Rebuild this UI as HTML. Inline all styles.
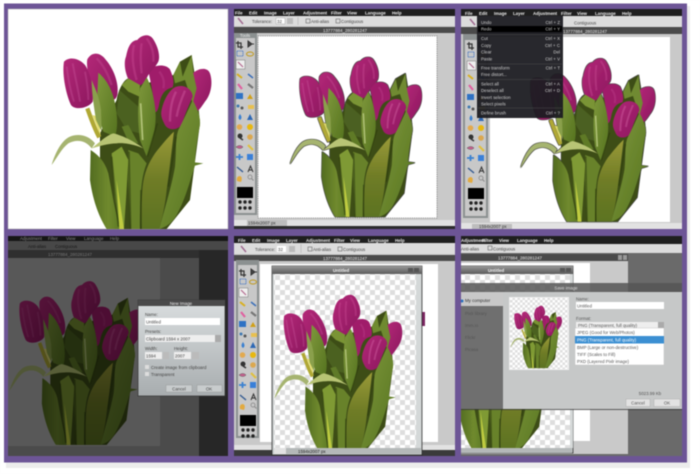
<!DOCTYPE html>
<html>
<head>
<meta charset="utf-8">
<style>
html,body{margin:0;padding:0;width:700px;height:474px;overflow:hidden;background:#fbfbfb}
svg{display:block;filter:blur(.45px)}
text{font-family:"Liberation Sans",sans-serif;font-size:4.4px}
</style>
</head>
<body>
<svg width="700" height="474" viewBox="0 0 700 474" xmlns="http://www.w3.org/2000/svg">
<defs>
<pattern id="chk" width="10" height="10" patternUnits="userSpaceOnUse">
<rect width="10" height="10" fill="#fff"/><rect width="5" height="5" fill="#dedede"/><rect x="5" y="5" width="5" height="5" fill="#dedede"/>
</pattern>
<pattern id="chk2" width="5" height="5" patternUnits="userSpaceOnUse">
<rect width="5" height="5" fill="#fff"/><rect width="2.5" height="2.5" fill="#dedede"/><rect x="2.5" y="2.5" width="2.5" height="2.5" fill="#dedede"/>
</pattern>
<linearGradient id="olive" x1="0" y1="0" x2="0" y2="1"><stop offset="0" stop-color="#9a9a38"/><stop offset=".5" stop-color="#6f7c26"/><stop offset="1" stop-color="#5c7322"/></linearGradient>
<linearGradient id="grn" x1="0" y1="0" x2="1" y2="1"><stop offset="0" stop-color="#7f983c"/><stop offset="1" stop-color="#55731f"/></linearGradient>
<linearGradient id="grn2" x1="0" y1="0" x2="1" y2="0"><stop offset="0" stop-color="#526c20"/><stop offset=".6" stop-color="#708a2e"/><stop offset="1" stop-color="#5c7a24"/></linearGradient>
<linearGradient id="mag" x1="0" y1="0" x2="1" y2="1"><stop offset="0" stop-color="#b32878"/><stop offset="1" stop-color="#8c175e"/></linearGradient>
<linearGradient id="dlg" x1="0" y1="0" x2="0" y2="1"><stop offset="0" stop-color="#dadedf"/><stop offset="1" stop-color="#a8adaf"/></linearGradient>
<linearGradient id="ttl" x1="0" y1="0" x2="0" y2="1"><stop offset="0" stop-color="#999"/><stop offset="1" stop-color="#5a5a5a"/></linearGradient>
<filter id="ants" x="-5%" y="-5%" width="110%" height="110%">
<feMorphology in="SourceAlpha" operator="dilate" radius="2" result="d"/>
<feFlood flood-color="#444"/><feComposite in2="d" operator="in" result="o"/>
<feMerge><feMergeNode in="o"/><feMergeNode in="SourceGraphic"/></feMerge>
</filter>
<clipPath id="c1"><rect x="8" y="9" width="220" height="220"/></clipPath>
<clipPath id="c2"><rect x="234" y="9" width="221" height="220"/></clipPath>
<clipPath id="c3"><rect x="461" y="9" width="221" height="220"/></clipPath>
<clipPath id="c4"><rect x="8" y="236" width="220" height="220"/></clipPath>
<clipPath id="c4b"><rect x="8" y="258" width="152" height="188"/></clipPath>
<clipPath id="c5"><rect x="274" y="274" width="142" height="174"/></clipPath>
<clipPath id="c5p"><rect x="234" y="236" width="221" height="220"/></clipPath>
<clipPath id="c6"><rect x="461" y="236" width="221" height="220"/></clipPath>
<clipPath id="c6b"><rect x="461" y="409" width="109" height="39"/></clipPath>
<clipPath id="c6c"><rect x="510" y="298" width="58" height="71"/></clipPath>

<g id="tulip">
<path d="M350,300 C355,270 370,240 385,235 L440,250 L520,225 L540,185 L575,165 L590,260 L600,370 L570,600 L500,687 L330,687 L300,500 L300,400 Z" fill="#3d4d16"/>
<path d="M262,325 C275,360 285,390 298,412" stroke="#b0a834" stroke-width="13" fill="none"/>
<path d="M277,345 L302,408 L296,350 Z" fill="#e2dc6c"/>
<path d="M262,178 C275,155 300,155 318,180 C340,205 358,250 352,285 C348,298 342,300 338,298 L320,320 L270,280 C268,240 258,195 262,178Z" fill="url(#mag)"/>
<path d="M192,185 C205,170 235,172 255,195 C272,220 282,270 278,305 C265,325 225,332 213,315 C200,290 185,225 192,185 Z" fill="url(#mag)"/>
<path d="M218,190 C225,230 235,270 240,305 M200,200 C205,240 210,270 222,305 M255,215 C262,250 265,280 265,300" stroke="#d060a6" stroke-width="6" fill="none" opacity=".3"/>
<path d="M290,175 C310,195 325,225 335,255" stroke="#cc5aa0" stroke-width="7" fill="none" opacity=".3"/>
<path d="M578,220 C595,205 622,200 630,220 C640,250 632,285 615,305 C605,320 595,335 588,335 L575,290Z" fill="url(#mag)"/>
<path d="M520,225 L540,185 L548,230 L575,165 L580,220 L590,265 L578,310 L555,240 L525,250 Z" fill="#6f8a30"/>
<path d="M445,212 C460,195 495,190 510,208 C522,235 522,250 518,262 C495,268 485,280 478,310 C475,330 468,340 465,335 C462,300 455,260 445,212Z" fill="#a01c6a"/>
<path d="M478,215 C490,230 495,245 490,265" stroke="#c84c96" stroke-width="7" fill="none" opacity=".3"/>
<path d="M378,170 C385,135 395,122 412,120 C425,105 445,100 458,115 C472,135 482,165 475,185 C465,205 448,215 440,235 C430,258 405,265 395,255 C380,235 368,195 378,170Z" fill="url(#mag)"/>
<path d="M402,135 C395,165 398,200 410,240 M440,115 C455,135 462,160 460,185 M425,130 C420,160 422,190 425,220" stroke="#d658a2" stroke-width="7" fill="none" opacity=".3"/>
<path d="M365,255 L385,235 L420,255 L418,290 L385,275 Z" fill="#7a9434"/>
<path d="M358,270 L415,320 L420,400 L380,390 L350,340 Z" fill="#4b6120"/>
<path d="M295,218 C315,235 335,262 345,310 C352,345 355,380 345,410 L310,395 C298,360 290,330 292,280 Z" fill="url(#grn)"/>
<path d="M275,240 C285,265 298,290 303,330 L305,395 L288,360 C282,320 275,280 275,240Z" fill="#8aa04c"/>
<path d="M440,232 C450,250 460,280 465,320 C472,370 460,420 440,470 L420,420 C413,370 412,320 420,265 Z" fill="url(#grn)"/>
<path d="M422,310 L428,420" stroke="#b3c47a" stroke-width="5" fill="none"/>
<path d="M365,380 L385,375 L415,430 L385,425 Z" fill="#5f7a28"/>
<path d="M272,450 C295,465 315,485 325,520 C335,570 345,640 362,687 L320,687 C300,655 280,610 270,540 Z" fill="url(#grn2)"/>
<path d="M385,450 L415,460 L440,490 C425,530 420,570 420,687 L392,687 C390,640 388,600 385,540 Z" fill="#68822a"/>
<path d="M522,395 C515,450 510,500 500,570 C495,620 485,660 478,687 L425,687 C422,640 425,600 428,560 C432,520 445,490 465,460 C485,435 505,410 522,395 Z" fill="url(#olive)"/>
<path d="M335,460 L365,440 L385,480 L378,600 L372,687 L360,687 L345,600 Z" fill="#7f9a34"/>
<path d="M350,540 L372,687 L358,687 Z" fill="#c0cc40"/>
<path d="M155,495 C165,460 185,420 210,410 C235,400 265,405 285,430 L275,445 C260,425 235,415 205,430 C185,445 170,475 155,495Z" fill="#a6b470"/>
<path d="M275,445 C295,430 320,405 340,400 C365,405 405,425 430,445 C400,432 370,428 350,430 C325,430 300,438 275,445Z" fill="#b8c474"/>
<path d="M484,335 C490,300 510,265 530,260 C555,252 578,270 578,290 C570,310 555,340 545,375 C530,392 505,392 495,375 C488,360 482,350 484,335Z" fill="url(#mag)"/>
<path d="M528,275 C515,300 510,330 510,365 M555,272 C545,295 535,320 530,350" stroke="#dc6cae" stroke-width="7" fill="none" opacity=".35"/>
<path d="M578,300 C595,330 605,360 598,385 C590,430 585,460 585,487 L610,490 L585,497 C570,540 560,590 530,645 C515,670 500,680 478,687 C490,640 515,560 525,500 C530,450 525,420 535,390 C550,360 565,330 578,300Z" fill="url(#grn)"/>
<path d="M387,455 L392,687 M423,570 L423,687 M472,370 L442,470 M528,410 L505,560 M335,470 L355,680" stroke="#2c3a0c" stroke-width="5" fill="none" opacity=".55"/>
</g>

<g id="tools">
<path d="M238,41 v6 h5 M236,43 h5 v6" stroke="#333" stroke-width="1.2" fill="none"/>
<path d="M248,41 l4,3 l-4,3 Z M252,44 h2" stroke="#333" stroke-width="1" fill="#444"/>
<rect x="237" y="51" width="6" height="5" fill="none" stroke="#4a78c0" stroke-dasharray="1 .6"/>
<ellipse cx="250" cy="54" rx="3.5" ry="2" fill="none" stroke="#c09a20"/>
<rect x="236" y="60" width="9" height="9" fill="#eee" stroke="#777" stroke-width=".5"/>
<path d="M238,62 l5,5" stroke="#b36a90" stroke-width="1.2"/>
<path d="M237,74 l5,4" stroke="#d9b020" stroke-width="2"/><path d="M248,74 l5,4" stroke="#3e70b8" stroke-width="1.6"/>
<path d="M238,84 l4,5" stroke="#e060a0" stroke-width="2.2"/><path d="M248,84 l5,4" stroke="#777" stroke-width="2.2"/>
<rect x="236" y="93" width="7" height="6" fill="#2f72c4"/><path d="M247,99 l3,-5 l3,5 Z" fill="#d0a018"/>
<circle cx="238" cy="106" r="1.5" fill="#3d78b0"/><circle cx="242" cy="108" r="1.5" fill="#555"/><rect x="248" y="105" width="6" height="4" fill="#e8c050"/>
<path d="M240,114 q-3,4 0,6 q3,-2 0,-6" fill="#3a80d0"/><path d="M250,114 l-3,6 h6 Z" fill="#2d68b5"/>
<circle cx="239.500" cy="127" r="2.800" fill="#e2aa50"/><circle cx="250" cy="127" r="3" fill="#e8b810"/>
<circle cx="240" cy="136" r="2.500" fill="#333"/><path d="M240,138 l3,2" stroke="#333" stroke-width="1.400"/><circle cx="250" cy="137" r="2.800" fill="#dba850"/>
<path d="M236,147 q4,-3 7,0 q-3,3 -7,0" fill="#c86090" stroke="#444" stroke-width=".4"/><path d="M248,145 l5,5" stroke="#e0c040" stroke-width="2.200"/>
<path d="M236,157 h7 M239.500,154 v6" stroke="#3a80d0" stroke-width="1.800"/><rect x="247" y="154" width="6" height="6" fill="#3a80d8"/>
<path d="M237,167 l6,5" stroke="#335a90" stroke-width="1.400"/><path d="M248,172 l2.500,-6 l2.500,6 M249,170 h3" stroke="#333" stroke-width="1" fill="none"/>
<path d="M237,181 q-1,-5 3,-5 q3,1 1,6 Z" fill="#e2aa40"/><circle cx="250" cy="177" r="2" fill="none" stroke="#888" stroke-width=".8"/><path d="M251.500,178.500 l2,2" stroke="#888"/>
<rect x="237" y="187" width="16" height="11" fill="#000"/>
<g fill="#222"><circle cx="240" cy="202" r="1.700"/><circle cx="245" cy="202" r="1.700"/><circle cx="250" cy="202" r="1.700"/><circle cx="240" cy="208" r="1.700"/><circle cx="245" cy="208" r="1.700"/><circle cx="250" cy="208" r="1.700"/></g>
</g>
<g id="menu" fill="#eee" font-weight="bold">
<text x="0" y="0">File</text><text x="14" y="0">Edit</text><text x="29" y="0">Image</text><text x="48" y="0">Layer</text><text x="68" y="0">Adjustment</text><text x="96" y="0">Filter</text><text x="112" y="0">View</text><text x="130" y="0">Language</text><text x="157" y="0">Help</text>
</g>
</defs>

<rect width="700" height="474" fill="#fff"/>
<rect x="6" y="6" width="684" height="462" fill="#e4e4e4" opacity=".7"/>
<rect x="4" y="3.500" width="683" height="459" fill="#6d5596"/>

<!-- Panel 1 -->
<rect x="8" y="9" width="220" height="220" fill="#fff" stroke="#aaa" stroke-width=".5"/>
<g clip-path="url(#c1)"><use href="#tulip" transform="scale(.3333)"/></g>

<!-- Panel 2 -->
<g clip-path="url(#c2)">
<rect x="234" y="9" width="221" height="220" fill="#c9c9c9"/>
<rect x="234" y="9" width="221" height="7" fill="#1f1f1f"/>
<use href="#menu" transform="translate(235,14.500)"/>
<rect x="234" y="16" width="221" height="10" fill="#dcdcdc"/>
<path d="M238,18 l5,6" stroke="#a06a90" stroke-width="1.500"/>
<text x="252" y="23" fill="#444">Tolerance:</text><rect x="276" y="18" width="9" height="6" fill="#fff" stroke="#999" stroke-width=".4"/><text x="277" y="23" fill="#444">32</text><rect x="287" y="18" width="6" height="6" fill="#bbb"/>
<path d="M298,17 v8" stroke="#aaa" stroke-width=".5"/>
<rect x="306" y="19" width="4" height="4" fill="none" stroke="#555" stroke-width=".5"/><text x="311" y="23" fill="#444">Anti-alias</text>
<rect x="336" y="19" width="4" height="4" fill="none" stroke="#555" stroke-width=".5"/><text x="341" y="23" fill="#444">Contiguous</text>
<rect x="234" y="27" width="221" height="6" fill="#4a4a4a"/>
<text x="345" y="31.800" text-anchor="middle" fill="#eee">13777884_280281247</text>
<rect x="258" y="36" width="179" height="182" fill="#fff" stroke="#555" stroke-width=".6" stroke-dasharray="1.200 1"/>
<use href="#tulip" transform="translate(247.300,28) scale(.275)" filter="url(#ants)"/>
<rect x="234" y="33" width="23" height="182" fill="#8b9090"/>
<rect x="236" y="38" width="19" height="175" fill="#c8c8c8"/>
<text x="245" y="37" text-anchor="middle" fill="#eee" font-size="4">Tools</text>
<use href="#tools"/>
<rect x="234" y="220" width="221" height="6" fill="#e2e2e2"/>
<rect x="247" y="220" width="40" height="6" fill="#bdbdbd"/>
<text x="248" y="224.500" fill="#333" font-size="4">1594x2007 px</text>
<rect x="234" y="226" width="221" height="3" fill="#2c2c2c"/>
</g>

<!-- Panel 3 -->
<g clip-path="url(#c3)">
<rect x="461" y="9" width="221" height="220" fill="#c9c9c9"/>
<rect x="461" y="9" width="221" height="7" fill="#1f1f1f"/>
<use href="#menu" transform="translate(465,15)"/>
<rect x="461" y="16" width="221" height="11" fill="#dcdcdc"/>
<path d="M470,19 l5,6" stroke="#a06a90" stroke-width="1.500"/>
<text x="574" y="24.500" fill="#444">Contiguous</text>
<rect x="461" y="27" width="221" height="7" fill="#4a4a4a"/>
<text x="585" y="33" text-anchor="middle" fill="#eee">13777884_280281247</text>
<rect x="490" y="37" width="180" height="185" fill="#fff"/>
<use href="#tulip" transform="translate(477,28.600) scale(.281)" filter="url(#ants)"/>
<rect x="463" y="34" width="25" height="184" fill="#8b9090"/>
<rect x="465" y="40" width="21" height="176" fill="#c8c8c8"/>
<use href="#tools" transform="translate(231,1)"/>
<rect x="461" y="223" width="221" height="6" fill="#e2e2e2"/>
<rect x="472" y="224" width="40" height="5" fill="#bdbdbd"/>
<text x="479" y="228" fill="#333" font-size="4">1594x2007 px</text>
<rect x="477" y="16" width="86" height="102" fill="#1c1c22" opacity=".95"/>
<rect x="478" y="26" width="84" height="6" fill="#000"/>
<g fill="#cfcfcf" font-size="4.100">
<text x="481" y="24">Undo</text><text x="560" y="24" text-anchor="end">Ctrl + Z</text>
<text x="481" y="30.500">Redo</text><text x="560" y="30.500" text-anchor="end">Ctrl + Y</text>
<text x="481" y="40">Cut</text><text x="560" y="40" text-anchor="end">Ctrl + X</text>
<text x="481" y="47">Copy</text><text x="560" y="47" text-anchor="end">Ctrl + C</text>
<text x="481" y="53.500">Clear</text><text x="560" y="53.500" text-anchor="end">Del</text>
<text x="481" y="60.500">Paste</text><text x="560" y="60.500" text-anchor="end">Ctrl + V</text>
<text x="481" y="69.500">Free transform</text><text x="560" y="69.500" text-anchor="end">Ctrl + T</text>
<text x="481" y="76">Free distort...</text>
<text x="481" y="85.500">Select all</text><text x="560" y="85.500" text-anchor="end">Ctrl + A</text>
<text x="481" y="92">Deselect all</text><text x="560" y="92" text-anchor="end">Ctrl + D</text>
<text x="481" y="99">Invert selection</text>
<text x="481" y="105.500">Select pixels</text>
<text x="481" y="114.500">Define brush</text><text x="560" y="114.500" text-anchor="end">Ctrl + ?</text>
</g>
<path d="M478,34.500 h84 M478,64 h84 M478,79.500 h84 M478,108 h84" stroke="#555" stroke-width=".4"/>
</g>

<!-- Panel 4 -->
<g clip-path="url(#c4)">
<rect x="8" y="236" width="220" height="220" fill="#272727"/>
<rect x="8" y="236" width="220" height="5" fill="#161616"/>
<g fill="#888"><text x="20" y="240">Adjustment</text><text x="48" y="240">Filter</text><text x="66" y="240">View</text><text x="84" y="240">Language</text><text x="110" y="240">Help</text></g>
<rect x="8" y="241" width="220" height="9" fill="#484848"/>
<text x="28" y="248" fill="#161616">Anti-alias</text><text x="55" y="248" fill="#161616">Contiguous</text>
<rect x="8" y="250" width="191" height="206" fill="#4b4b4b"/>
<rect x="8" y="250" width="191" height="8" fill="#2f2f2f"/>
<text x="70" y="256" text-anchor="middle" fill="#777">13777884_280281247</text>
<rect x="8" y="258" width="152" height="188" fill="#585858"/>
<g clip-path="url(#c4b)"><use href="#tulip" transform="translate(-34.300,251.200) scale(.282)" style="filter:brightness(.48)"/></g>
<rect x="138" y="300" width="87" height="96" fill="url(#dlg)" stroke="#333" stroke-width=".7"/>
<rect x="138" y="300" width="87" height="6" fill="#4a4a4a"/>
<text x="181" y="305" text-anchor="middle" fill="#eee" font-size="4.200">New Image</text>
<g fill="#444" font-size="4.200">
<text x="145" y="316">Name:</text>
<rect x="145" y="318" width="75" height="7" fill="#fff"/>
<text x="146" y="323.500">Untitled</text>
<text x="145" y="333">Presets:</text>
<rect x="145" y="335" width="70" height="7" fill="#eee"/>
<text x="146" y="340.500">Clipboard 1594 x 2007</text>
<rect x="215" y="335" width="6" height="7" fill="#aaa"/>
<text x="145" y="350">Width:</text><text x="174" y="350">Height:</text>
<rect x="145" y="352" width="17" height="7" fill="#eee"/><text x="146" y="357.500">1594</text><rect x="163" y="352" width="6" height="7" fill="#bbb"/>
<rect x="174" y="352" width="17" height="7" fill="#eee"/><text x="175" y="357.500">2007</text><rect x="192" y="352" width="7" height="7" fill="#bbb"/>
<rect x="145" y="365" width="4" height="4" fill="#ddd"/><text x="151" y="369">Create image from clipboard</text>
<rect x="145" y="372" width="4" height="4" fill="#ddd"/><text x="151" y="376">Transparent</text>
<rect x="166" y="385" width="26" height="7" fill="#c8cccd" stroke="#888" stroke-width=".3"/><text x="179" y="390.500" text-anchor="middle">Cancel</text>
<rect x="197" y="385" width="25" height="7" fill="#c8cccd" stroke="#888" stroke-width=".3"/><text x="209" y="390.500" text-anchor="middle">OK</text>
</g>
</g>

<!-- Panel 5 -->
<g clip-path="url(#c5p)">
<rect x="234" y="236" width="221" height="220" fill="#c9c9c9"/>
<rect x="234" y="236" width="221" height="7" fill="#1f1f1f"/>
<use href="#menu" transform="translate(238,242)"/>
<rect x="234" y="243" width="221" height="11" fill="#dcdcdc"/>
<path d="M241,246 l5,6" stroke="#a06a90" stroke-width="1.500"/>
<text x="255" y="251" fill="#444">Tolerance:</text><rect x="277" y="246" width="9" height="6" fill="#fff"/><text x="278" y="251" fill="#444">32</text><rect x="289" y="246" width="6" height="6" fill="#bbb"/>
<path d="M301,244 v9" stroke="#aaa" stroke-width=".5"/>
<rect x="308" y="247" width="4" height="4" fill="none" stroke="#555" stroke-width=".5"/><text x="313" y="251" fill="#444">Anti-alias</text>
<rect x="338" y="247" width="4" height="4" fill="none" stroke="#555" stroke-width=".5"/><text x="343" y="251" fill="#444">Contiguous</text>
<rect x="234" y="255" width="221" height="6" fill="#4a4a4a"/>
<text x="345" y="260" text-anchor="middle" fill="#eee">13777884_280281247</text>
<rect x="260" y="264" width="178" height="178" fill="#fff"/>
<rect x="422" y="312" width="3" height="14" fill="#7a2460"/>
<rect x="236" y="260" width="23" height="178" fill="#8b9090"/>
<rect x="238" y="265" width="19" height="171" fill="#c8c8c8"/>
<use href="#tools" transform="translate(3,228)"/>
<rect x="234" y="445" width="221" height="5" fill="#e2e2e2"/>
<rect x="234" y="450" width="221" height="6" fill="#3a3a3a"/>
<rect x="272" y="266" width="150" height="189" fill="#c8cccc" stroke="#222" stroke-width=".7"/>
<rect x="272" y="266" width="150" height="8" fill="url(#ttl)"/>
<text x="341" y="272" text-anchor="middle" fill="#eee" font-weight="bold">Untitled</text>
<rect x="408" y="268" width="5" height="4" fill="#555"/><rect x="414" y="268" width="5" height="4" fill="#555"/>
<rect x="274" y="274" width="142" height="174" fill="url(#chk)"/>
<g clip-path="url(#c5)"><use href="#tulip" transform="translate(232.900,266.500) scale(.267)"/></g>
<rect x="416" y="274" width="5" height="174" fill="#d4d8d8"/>
<rect x="274" y="448" width="147" height="6" fill="#b4b8b8"/>
<rect x="274" y="448" width="12" height="6" fill="#e2e2e2"/>
<text x="298" y="453" fill="#222" font-size="4">1594x2007 px</text>
</g>

<!-- Panel 6 -->
<g clip-path="url(#c6)">
<rect x="461" y="236" width="221" height="220" fill="#6a6a6a"/>
<rect x="461" y="236" width="221" height="8" fill="#1f1f1f"/>
<g fill="#eee" font-weight="bold"><text x="461" y="242">Adjustment</text><text x="482" y="242">Filter</text><text x="499" y="242">View</text><text x="517" y="242">Language</text><text x="544" y="242">Help</text></g>
<rect x="461" y="244" width="221" height="9" fill="#dcdcdc"/>
<text x="461" y="250.500" fill="#444">Anti-alias</text><rect x="488" y="246" width="4" height="4" fill="none" stroke="#555" stroke-width=".5"/><text x="493" y="250.500" fill="#444">Contiguous</text>
<rect x="461" y="254" width="167" height="200" fill="#c9c9c9"/>
<rect x="461" y="254" width="167" height="7" fill="#4a4a4a"/>
<text x="520" y="259.500" text-anchor="middle" fill="#eee">13777884_280281247</text>
<rect x="618" y="255" width="4" height="5" fill="#999"/><rect x="623" y="255" width="4" height="5" fill="#999"/>
<rect x="461" y="263" width="129" height="178" fill="#fff"/>
<rect x="461" y="266" width="112" height="187" fill="#c8cccc" stroke="#222" stroke-width=".7"/>
<rect x="461" y="266" width="112" height="8" fill="url(#ttl)"/>
<text x="496" y="272" text-anchor="middle" fill="#eee" font-weight="bold">Untitled</text>
<rect x="560" y="268" width="5" height="4" fill="#555"/><rect x="566" y="268" width="5" height="4" fill="#555"/>
<rect x="461" y="274" width="109" height="174" fill="url(#chk)"/>
<g clip-path="url(#c6b)"><use href="#tulip" transform="translate(387,266.500) scale(.267)"/></g>
<rect x="570" y="274" width="3" height="174" fill="#d4d8d8"/>
<rect x="461" y="448" width="111" height="5" fill="#b4b8b8"/>
<rect x="461" y="283" width="221" height="9" fill="#555" opacity=".85"/>
<text x="566" y="289.500" text-anchor="middle" fill="#ddd">Save image</text>
<rect x="461" y="292" width="221" height="117" fill="#c6c8c8"/>
<rect x="461" y="292" width="42" height="117" fill="#6f6f6f"/>
<rect x="461" y="292" width="42" height="14" fill="#c8c8c8"/>
<circle cx="462" cy="301" r="1.500" fill="#2a72c0"/>
<text x="465" y="302" fill="#333">My computer</text>
<g fill="#555"><text x="465" y="315">Pixlr library</text><text x="465" y="327">Imm.io</text><text x="465" y="339">Flickr</text><text x="465" y="351">Picasa</text></g>
<rect x="509" y="297" width="60" height="73" fill="#eee"/>
<rect x="510" y="298" width="58" height="71" fill="url(#chk2)"/>
<g clip-path="url(#c6c)"><use href="#tulip" transform="translate(493.800,294.300) scale(.1075)"/></g>
<g fill="#555" font-size="4.200">
<text x="576" y="300.500">Name:</text>
<rect x="576" y="302" width="88" height="7" fill="#fff"/>
<text x="577" y="307.500">Untitled</text>
<text x="576" y="320">Format:</text>
<rect x="576" y="322" width="88" height="6" fill="#eee"/>
<text x="578" y="327">PNG (Transparent, full quality)</text>
<rect x="658" y="322" width="6" height="6" fill="#aaa"/>
<rect x="575" y="328" width="89" height="37" fill="#fff" stroke="#bbb" stroke-width=".4"/>
<rect x="575" y="336" width="89" height="7.500" fill="#3b8fd2"/>
<text x="577" y="334">JPEG (Good for Web/Photos)</text>
<text x="577" y="341.500" fill="#fff">PNG (Transparent, full quality)</text>
<text x="577" y="349">BMP (Large or non-destructive)</text>
<text x="577" y="356">TIFF (Scales to Fill)</text>
<text x="577" y="363">PXD (Layered Pixlr image)</text>
<text x="650" y="395" text-anchor="middle">5023.99 Kb</text>
<rect x="626" y="399" width="24" height="7.500" fill="#e2e2e2" stroke="#999" stroke-width=".3"/><text x="638" y="404.500" text-anchor="middle">Cancel</text>
<rect x="654" y="399" width="26" height="7.500" fill="#e2e2e2" stroke="#999" stroke-width=".3"/><text x="667" y="404.500" text-anchor="middle">OK</text>
</g>
<path d="M461,409.500 h221" stroke="#333" stroke-width=".8"/>
</g>
</svg>
</body>
</html>
